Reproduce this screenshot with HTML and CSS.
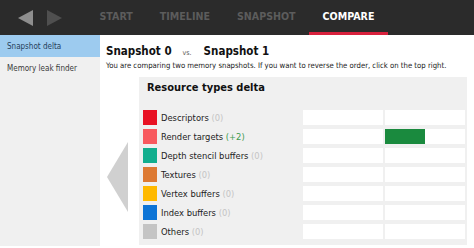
FILE: index.html
```html
<!DOCTYPE html>
<html>
<head>
<meta charset="utf-8">
<link rel="stylesheet" href="styles.css">
</head>
<body>
<header class="topbar">
  <div class="arrows">
    <svg class="arrow back" width="15" height="16" viewBox="0 0 15 16"><polygon points="15,0 0,8 15,16"/></svg>
    <svg class="arrow fwd" width="15" height="16" viewBox="0 0 15 16"><polygon points="0,0 15,8 0,16"/></svg>
  </div>
  <nav class="tabs">
    <span class="tab">START</span>
    <span class="tab">TIMELINE</span>
    <span class="tab">SNAPSHOT</span>
    <span class="tab active">COMPARE</span>
  </nav>
</header>
<div class="layout">
  <aside class="sidebar">
    <div class="side-item active">Snapshot delta</div>
    <div class="side-item">Memory leak finder</div>
  </aside>
  <main class="main">
    <h1 class="title"><span>Snapshot 0</span><span class="vs">vs.</span><span>Snapshot 1</span></h1>
    <p class="desc">You are comparing two memory snapshots. If you want to reverse the order, click on the top right.</p>
    <div class="compare">
      <div class="pointer">
        <svg width="33" height="168" viewBox="0 0 33 168"><polygon points="22,65 1,100 22,135"/></svg>
      </div>
      <section class="panel">
        <h2 class="panel-title">Resource types delta</h2>
        <ul class="rows">
          <li class="row"><span class="swatch c-desc"></span><span class="label">Descriptors <span class="count">(0)</span></span><div class="bars"><div class="bar"></div><div class="bar"></div></div></li>
          <li class="row"><span class="swatch c-rt"></span><span class="label">Render targets <span class="count plus">(+2)</span></span><div class="bars"><div class="bar"></div><div class="bar"><div class="fill" style="width:40px"></div></div></div></li>
          <li class="row"><span class="swatch c-ds"></span><span class="label">Depth stencil buffers <span class="count">(0)</span></span><div class="bars"><div class="bar"></div><div class="bar"></div></div></li>
          <li class="row"><span class="swatch c-tex"></span><span class="label">Textures <span class="count">(0)</span></span><div class="bars"><div class="bar"></div><div class="bar"></div></div></li>
          <li class="row"><span class="swatch c-vb"></span><span class="label">Vertex buffers <span class="count">(0)</span></span><div class="bars"><div class="bar"></div><div class="bar"></div></div></li>
          <li class="row"><span class="swatch c-ib"></span><span class="label">Index buffers <span class="count">(0)</span></span><div class="bars"><div class="bar"></div><div class="bar"></div></div></li>
          <li class="row"><span class="swatch c-oth"></span><span class="label">Others <span class="count">(0)</span></span><div class="bars"><div class="bar"></div><div class="bar"></div></div></li>
        </ul>
      </section>
    </div>
  </main>
</div>
</body>
</html>
```
FILE: styles.css
```css
* { box-sizing: border-box; }
html, body { margin: 0; padding: 0; background: #fff; }
body {
  font-family: "DejaVu Sans Condensed", "DejaVu Sans", sans-serif;
  font-stretch: condensed;
  color: #333;
  width: 474px;
  height: 248px;
  overflow: hidden;
}
.topbar {
  height: 35px;
  background: #2b2b2b;
  display: flex;
}
.arrows {
  width: 86px;
  display: flex;
  align-items: flex-start;
  padding: 10px 0 0 18px;
  gap: 14px;
}
.arrow.back { fill: #8e8e8e; }
.arrow.fwd { fill: #4f4f4f; }
.tabs { display: flex; }
.tab {
  height: 35px;
  padding: 0 13.5px;
  display: flex;
  align-items: center;
  border-bottom: 3px solid transparent;
  font-weight: bold;
  font-size: 10.6px;
  color: #5c5c5c;
}
.tab.active { color: #fff; border-bottom-color: #d8213d; }

.layout { display: flex; }
.sidebar {
  width: 100px;
  height: 211px;
  background: #f0f0f0;
  font-size: 8px;
}
.side-item {
  height: 22px;
  padding-left: 7px;
  display: flex;
  align-items: center;
  color: #3a3a3a;
}
.side-item.active { background: #9dcbef; color: #25405a; }

.main { flex: 1; padding: 7px 7px 0 6px; }
.title {
  margin: 0;
  height: 18px;
  font-size: 11.5px;
  font-weight: bold;
  color: #111;
  line-height: 18px;
  display: flex;
  align-items: baseline;
}
.title .vs { font-size: 7px; font-weight: normal; color: #555; margin: 0 12px 0 11px; }
.desc { margin: 0; font-size: 7.7px; line-height: 12px; color: #222; white-space: nowrap; }
.compare { display: flex; margin-top: 5px; }
.pointer { width: 33px; flex: none; }
.pointer svg { display: block; fill: #d0d0d0; }
.panel {
  flex: 1;
  height: 168px;
  background: #f0f0f0;
  padding: 3px 2px 7px 4px;
}
.panel-title {
  margin: 0 0 0 4px;
  font-size: 11px;
  font-weight: bold;
  color: #111;
  line-height: 16px;
}
.rows { list-style: none; margin: 14px 0 0; padding: 0; display: flex; flex-direction: column; gap: 4px; }
.row { display: flex; align-items: center; height: 15px; }
.swatch { width: 14px; height: 15px; flex: none; }
.label { flex: 1; margin-left: 4px; font-size: 9.3px; color: #222; white-space: nowrap; }
.count { color: #c4c4c4; }
.count.plus { color: #3b9a4e; }
.bars { width: 162px; display: grid; grid-template-columns: 80px 80px; gap: 2px; height: 15px; }
.bar { background: #fff; height: 15px; }
.fill { height: 15px; background: #1a8a3e; }
.c-desc { background: #e81123; }
.c-rt { background: #f85a5f; }
.c-ds { background: #12ae8e; }
.c-tex { background: #dd7a33; }
.c-vb { background: #ffb900; }
.c-ib { background: #0c74d6; }
.c-oth { background: #c4c4c4; }
```
